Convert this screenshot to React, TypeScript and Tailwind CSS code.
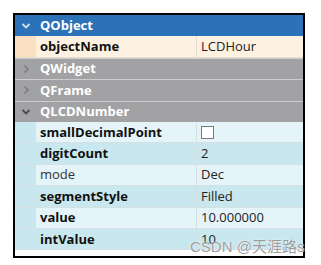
import React from "react";

type Row =
  | { kind: "group"; label: string; open: boolean; active?: boolean }
  | { kind: "prop"; name: string; value?: string; bold: boolean; check?: boolean; tone: "peach" | "light" | "dark" };

const rows: Row[] = [
  { kind: "group", label: "QObject", open: true, active: true },
  { kind: "prop", name: "objectName", value: "LCDHour", bold: true, tone: "peach" },
  { kind: "group", label: "QWidget", open: false },
  { kind: "group", label: "QFrame", open: false },
  { kind: "group", label: "QLCDNumber", open: true },
  { kind: "prop", name: "smallDecimalPoint", bold: true, check: true, tone: "light" },
  { kind: "prop", name: "digitCount", value: "2", bold: true, tone: "dark" },
  { kind: "prop", name: "mode", value: "Dec", bold: false, tone: "light" },
  { kind: "prop", name: "segmentStyle", value: "Filled", bold: true, tone: "dark" },
  { kind: "prop", name: "value", value: "10.000000", bold: true, tone: "light" },
  { kind: "prop", name: "intValue", value: "10", bold: true, tone: "dark" },
];

function Chevron({ open, color }: { open: boolean; color: string }) {
  return (
    <svg width="10" height="10" viewBox="0 0 10 10" fill="none">
      {open ? (
        <path d="M1.5 3l3.5 3.5L8.5 3" stroke={color} strokeWidth="1.8" />
      ) : (
        <path d="M3.5 1.5L7 5l-3.5 3.5" stroke={color} strokeWidth="1.6" />
      )}
    </svg>
  );
}

export default function App() {
  return (
    <div className="relative h-[265px] w-[321px] bg-white pl-[13px] pt-[13px] font-['Open_Sans','Noto_Sans',sans-serif] text-[13px]">
      <div className="h-[245px] w-[292px] border-2 border-black bg-white">
        {rows.map((r, i) => {
          if (r.kind === "group") {
            const bg = r.active ? "bg-[#2b72b8]" : "bg-[#a2a2a5] border-t border-[#cdcdcf]";
            const chev = r.active ? "#cfdff0" : r.open ? "#4a4a4c" : "#7c7c80";
            return (
              <div key={i} className={`flex h-[21.4px] items-center ${bg}`}>
                <div className="flex w-[21px] justify-center">
                  <Chevron open={r.open} color={chev} />
                </div>
                <span className="pl-[4px] font-bold leading-none text-white">{r.label}</span>
              </div>
            );
          }
          const rowBg =
            r.tone === "peach" ? "bg-[#fdf1e1]" : r.tone === "light" ? "bg-[#e5f4f8]" : "bg-[#c9e7ee]";
          const indent = r.tone === "peach" ? "bg-[#f9e0c1]" : "bg-[#c9e7ee]";
          const line = r.tone === "peach" ? "border-[#e4dccf]" : "border-[#d5e0e3]";
          return (
            <div key={i} className={`flex h-[21.4px] border-b ${line} ${rowBg}`}>
              <div className={`w-[21px] ${indent}`} />
              <div
                className={`flex w-[161px] items-center border-r ${line} pl-[4px] leading-none ${
                  r.bold ? "font-bold text-[#111]" : "text-[#333]"
                }`}
              >
                {r.name}
              </div>
              <div className="flex flex-1 items-center pl-[4px] leading-none text-[#222]">
                {r.check ? (
                  <span className="h-[13px] w-[13px] border border-[#7a7a7a] bg-white" />
                ) : (
                  r.value
                )}
              </div>
            </div>
          );
        })}
      </div>
      <div className="absolute left-[190px] top-[239px] font-['Liberation_Sans','Noto_Sans_CJK_SC',sans-serif] text-[15px] leading-none text-[#9c9c9c] [text-shadow:0_0_1px_#fff,0_0_1px_#fff]">
        CSDN @天涯路s
      </div>
    </div>
  );
}
